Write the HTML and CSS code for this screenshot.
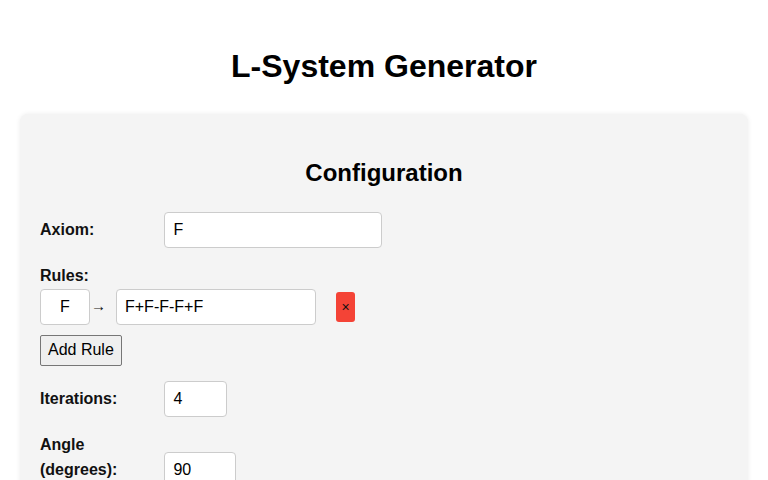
FILE: index.html
```html
<!DOCTYPE html>
<html>
<head>
<meta charset="utf-8">
<title>L-System Generator</title>
<link rel="stylesheet" href="styles.css">
</head>
<body>
<h1 class="title">L-System Generator</h1>
<div class="panel">
  <h2 class="panel-title">Configuration</h2>
  <div class="group">
    <label class="label">Axiom:</label>
    <input class="field field-axiom" type="text" value="F">
  </div>
  <div class="group">
    <label class="label label-block">Rules:</label>
    <div class="rule-row">
      <input class="field field-symbol" type="text" value="F">
      <span class="arrow">→</span>
      <input class="field field-rule" type="text" value="F+F-F-F+F">
      <button class="delete-btn">×</button>
    </div>
    <button class="add-btn">Add Rule</button>
  </div>
  <div class="group">
    <label class="label">Iterations:</label>
    <input class="field field-iter" type="text" value="4">
  </div>
  <div class="group">
    <label class="label">Angle (degrees):</label>
    <input class="field field-angle" type="text" value="90">
  </div>
</div>
</body>
</html>
```
FILE: styles.css
```css
html, body {
  margin: 0;
  background: #fff;
}
body {
  padding: 20px;
  font-family: "Liberation Sans", Arial, sans-serif;
  font-size: 16px;
  line-height: 1.6;
  color: #111;
}
.title {
  font-size: 32px;
  text-align: center;
  margin: 21.44px 0;
  color: #000;
}
.panel {
  background: #f4f4f4;
  border-radius: 8px;
  box-shadow: 0 0 5px rgba(0, 0, 0, 0.08);
  padding: 20px;
}
.panel-title {
  font-size: 24px;
  text-align: center;
  margin: 19.92px 0;
  color: #000;
}
.group {
  margin-bottom: 15px;
}
.label {
  display: inline-block;
  width: 120px;
  font-weight: bold;
}
.label-block {
  display: block;
  margin-bottom: 0;
}
.field {
  font-family: "Liberation Sans", Arial, sans-serif;
  font-size: 16px;
  line-height: normal;
  padding: 8px;
  border: 1px solid #ccc;
  border-radius: 4px;
  background: #fff;
  color: #000;
  box-sizing: border-box;
  height: 36px;
}
.field-axiom { width: 218px; }
.field-iter { width: 63px; }
.field-angle { width: 72px; }
.rule-row {
  display: flex;
  align-items: center;
  margin-bottom: 10px;
}
.field-symbol {
  width: 50px;
  text-align: center;
}
.arrow {
  font-size: 15px;
  line-height: 1;
  margin: 0 10px 2px 1px;
}
.field-rule { width: 200px; }
.delete-btn {
  margin-left: 20px;
  background: #f44336;
  border: none;
  border-radius: 3px;
  width: 19px;
  height: 30px;
  padding: 0;
  font-size: 14px;
  color: #111;
  font-family: "Liberation Sans", Arial, sans-serif;
}
.add-btn {
  font-family: "Liberation Sans", Arial, sans-serif;
  font-size: 16px;
  padding: 5px 7px;
  height: 31px;
  background: #efefef;
  border: 1px solid #767676;
  border-radius: 2px;
  color: #000;
  line-height: normal;
}
```
